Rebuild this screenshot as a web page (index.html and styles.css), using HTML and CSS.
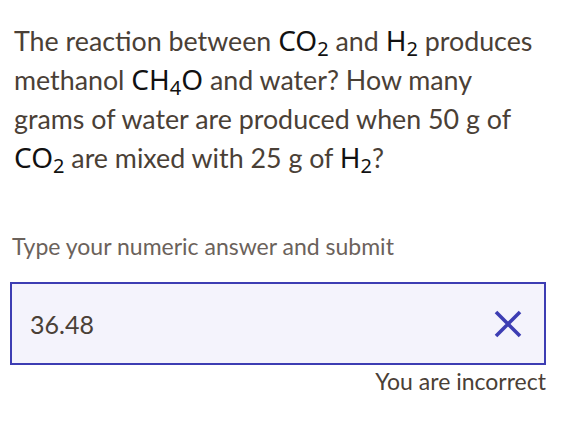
FILE: index.html
```
<!DOCTYPE html>
<html>
<head>
<meta charset="utf-8">
<link rel="stylesheet" href="styles.css">
</head>
<body>
<div class="page">
  <p class="question">The reaction between <span class="chem">CO<sub>2</sub></span> and <span class="chem">H<sub>2</sub></span> produces methanol <span class="chem">CH<sub>4</sub>O</span> and water? How many grams of water are produced when 50 g of <span class="chem">CO<sub>2</sub></span> are mixed with 25 g of <span class="chem">H<sub>2</sub></span>?</p>
  <div class="label">Type your numeric answer and submit</div>
  <div class="answer">
    <span class="value">36.48</span>
    <svg class="wrong" width="28" height="28" viewBox="0 0 28 28"><path d="M2 2 L26 26 M26 2 L2 26" stroke="#3d3db3" stroke-width="3.6" stroke-linecap="butt" fill="none"/></svg>
  </div>
  <div class="feedback">You are incorrect</div>
</div>
</body>
</html>
```
FILE: styles.css
```
html, body {
  margin: 0;
  padding: 0;
  background: #ffffff;
}
.page {
  width: 536px;
  padding: 22px 0 0 10px;
  font-family: "Lato", "Open Sans", sans-serif;
  color: #4a4036;
}
.question {
  margin: 0 0 0 4px;
  font-size: 26.8px;
  line-height: 39px;
}
.chem {
  font-family: "Noto Sans", "DejaVu Sans", sans-serif;
  font-size: 28px;
  color: #111111;
  line-height: 1;
}
.chem sub {
  font-size: 20px;
  vertical-align: -5px;
  line-height: 1;
}
.label {
  margin: 53px 0 0 2px;
  font-size: 23px;
  color: #6b625b;
  line-height: 30px;
}
.answer {
  margin-top: 21px;
  height: 79px;
  border: 2px solid #3d3db3;
  background: #f4f3fc;
  display: flex;
  align-items: center;
  justify-content: space-between;
  padding: 0 22px 0 18px;
}
.value {
  font-size: 25px;
  color: #4a4036;
}
.feedback {
  text-align: right;
  font-size: 23px;
  line-height: 32px;
  color: #4a4036;
}
```
